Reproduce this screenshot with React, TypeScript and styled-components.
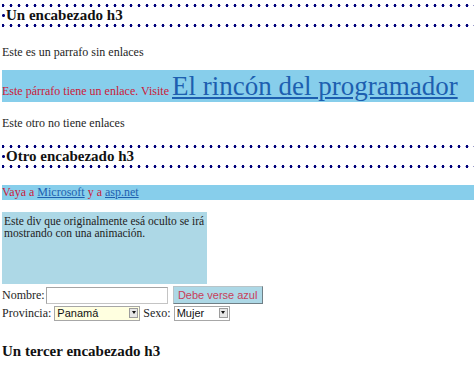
import styled, { createGlobalStyle } from "styled-components";

const GlobalStyle = createGlobalStyle`
  body {
    margin: 0;
    background: #ffffff;
    font-family: "Liberation Serif", "Times New Roman", serif;
    font-size: 12px;
    color: #1e1e1e;
  }
`;

const dot = "radial-gradient(circle at center, #00007a 1.2px, transparent 1.7px)";

const Page = styled.div`
  padding: 4px 0 0 2px;
  width: 472px;
  overflow: hidden;
`;

const DottedHeading = styled.h3<{ $gap: number }>`
  margin: ${(p) => p.$gap}px 0 0 0;
  padding: 3px 0 3px 4px;
  font: bold 15px/17px "Liberation Serif", serif;
  color: #111;
  background-image: ${dot}, ${dot}, ${dot};
  background-size: 8px 3px, 8px 3px, 3px 3px;
  background-repeat: repeat-x, repeat-x, no-repeat;
  background-position: -3px 0, -3px 100%, 0 50%;
`;

const PlainHeading = styled.h3<{ $gap: number }>`
  margin: ${(p) => p.$gap}px 0 0 0;
  font: bold 15px/17px "Liberation Serif", serif;
  color: #111;
`;

const Paragraph = styled.p<{ $gap: number }>`
  margin: ${(p) => p.$gap}px 0 0 0;
  line-height: 14px;
`;

const LinkBar = styled.p<{ $gap: number; $tall?: boolean }>`
  margin: ${(p) => p.$gap}px 0 0 0;
  background: #87ceeb;
  color: #cc1a3a;
  line-height: ${(p) => (p.$tall ? "20px" : "15px")};
  padding: ${(p) => (p.$tall ? "6px 0 1px 0" : "0")};
  white-space: nowrap;
`;

const Link = styled.a<{ $big?: boolean }>`
  color: #1d5fb0;
  text-decoration: underline;
  font-size: ${(p) => (p.$big ? "27px" : "12px")};
`;

const HiddenBox = styled.div`
  margin-top: 12px;
  width: 205px;
  height: 72px;
  box-sizing: border-box;
  padding: 3px 2px 0 2px;
  background: #add8e6;
  font-size: 11.5px;
  line-height: 12px;
  color: #222;
`;

const FormRow = styled.div<{ $gap: number; $height: number }>`
  margin-top: ${(p) => p.$gap}px;
  height: ${(p) => p.$height}px;
  display: flex;
  align-items: center;
  white-space: nowrap;
`;

const Label = styled.span<{ $left?: number; $right?: number }>`
  margin-left: ${(p) => p.$left ?? 0}px;
  margin-right: ${(p) => p.$right ?? 0}px;
`;

const TextInput = styled.input`
  width: 122px;
  height: 17px;
  box-sizing: border-box;
  margin: 0 0 0 1px;
  border: 1px solid #c4c4c4;
  border-top-color: #a4a4a4;
  border-left-color: #a4a4a4;
  background: #fff;
  padding: 0 2px;
`;

const BlueButton = styled.button`
  width: 90px;
  height: 18px;
  margin-left: 5px;
  padding: 0;
  box-sizing: border-box;
  background: #add8e6;
  color: #c8405a;
  font: 11px "Liberation Sans", Arial, sans-serif;
  border: 1px solid #b8c4c8;
  border-right-color: #6f7f86;
  border-bottom-color: #6f7f86;
`;

const SelectWrap = styled.span<{ $width: number }>`
  position: relative;
  display: inline-block;
  width: ${(p) => p.$width}px;
  height: 15px;
`;

const Select = styled.select<{ $bg: string }>`
  appearance: none;
  width: 100%;
  height: 100%;
  box-sizing: border-box;
  margin: 0;
  padding: 0 0 0 2px;
  border: 1px solid #a7a7a7;
  background: ${(p) => p.$bg};
  color: #111;
  font: 11px/13px "Liberation Sans", Arial, sans-serif;
`;

const Arrow = styled.span`
  position: absolute;
  top: 2px;
  right: 2px;
  width: 9px;
  height: 10px;
  box-sizing: border-box;
  background: #e6e6e6;
  border: 1px solid #9c9c9c;
  pointer-events: none;
  display: flex;
  align-items: center;
  justify-content: center;

  &::after {
    content: "";
    border-left: 2.5px solid transparent;
    border-right: 2.5px solid transparent;
    border-top: 3px solid #111;
  }
`;

export default function App() {
  return (
    <>
      <GlobalStyle />
      <Page>
        <DottedHeading $gap={0}>Un encabezado h3</DottedHeading>
        <Paragraph $gap={18}>Este es un parrafo sin enlaces</Paragraph>
        <LinkBar $gap={11} $tall>
          Este párrafo tiene un enlace. Visite{" "}
          <Link $big href="#">
            El rincón del programador
          </Link>
        </LinkBar>
        <Paragraph $gap={14}>Este otro no tiene enlaces</Paragraph>
        <DottedHeading $gap={15}>Otro encabezado h3</DottedHeading>
        <LinkBar $gap={17}>
          Vaya a <Link href="#">Microsoft</Link> y a <Link href="#">asp.net</Link>
        </LinkBar>
        <HiddenBox>
          Este div que originalmente esá oculto se irá mostrando con una
          animación.
        </HiddenBox>
        <FormRow $gap={2} $height={18}>
          <Label>Nombre:</Label>
          <TextInput type="text" />
          <BlueButton type="button">Debe verse azul</BlueButton>
        </FormRow>
        <FormRow $gap={1} $height={16}>
          <Label $right={3}>Provincia:</Label>
          <SelectWrap $width={86}>
            <Select $bg="#ffffe0" defaultValue="Panamá">
              <option>Panamá</option>
            </Select>
            <Arrow />
          </SelectWrap>
          <Label $left={3} $right={3}>
            Sexo:
          </Label>
          <SelectWrap $width={56}>
            <Select $bg="#ffffff" defaultValue="Mujer">
              <option>Mujer</option>
            </Select>
            <Arrow />
          </SelectWrap>
        </FormRow>
        <PlainHeading $gap={22}>Un tercer encabezado h3</PlainHeading>
      </Page>
    </>
  );
}
